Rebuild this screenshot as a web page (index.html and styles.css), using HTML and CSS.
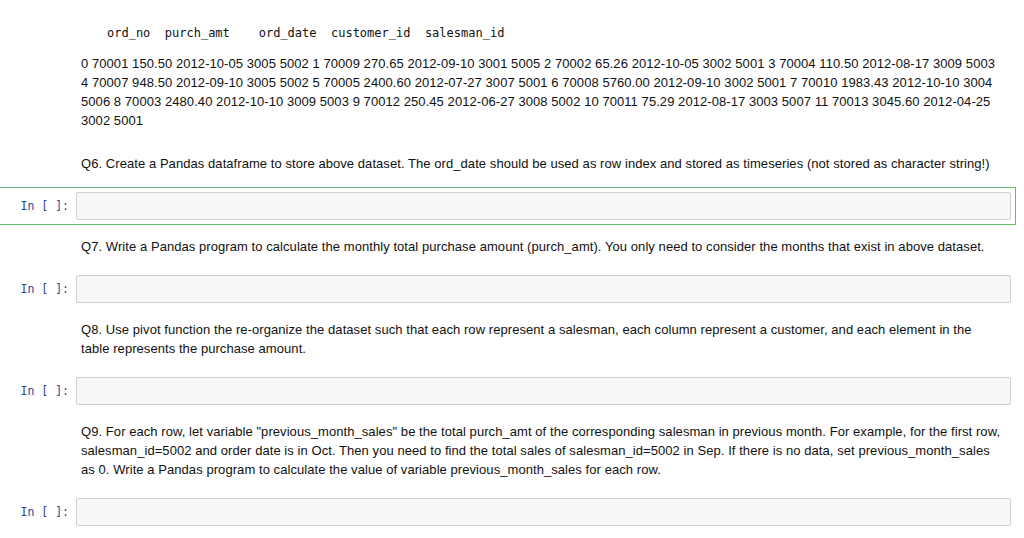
FILE: index.html
```html
<!DOCTYPE html>
<html>
<head>
<meta charset="utf-8">
<title>Notebook</title>
<link rel="stylesheet" href="styles.css">
</head>
<body>
<div class="notebook">
  <div class="cell md first">
    <div class="prompt"></div>
    <div class="rendered">
      <pre class="header">ord_no  purch_amt    ord_date  customer_id  salesman_id</pre>
      <p class="data">0 70001 150.50 2012-10-05 3005 5002 1 70009 270.65 2012-09-10 3001 5005 2 70002 65.26 2012-10-05 3002 5001 3 70004 110.50 2012-08-17 3009 5003 4 70007 948.50 2012-09-10 3005 5002 5 70005 2400.60 2012-07-27 3007 5001 6 70008 5760.00 2012-09-10 3002 5001 7 70010 1983.43 2012-10-10 3004 5006 8 70003 2480.40 2012-10-10 3009 5003 9 70012 250.45 2012-06-27 3008 5002 10 70011 75.29 2012-08-17 3003 5007 11 70013 3045.60 2012-04-25 3002 5001</p>
      <p class="q q6">Q6. Create a Pandas dataframe to store above dataset. The ord_date should be used as row index and stored as timeseries (not stored as character string!)</p>
    </div>
  </div>

  <div class="cell code selected">
    <div class="prompt">In&nbsp;[&nbsp;]:</div>
    <div class="input"></div>
  </div>

  <div class="cell md">
    <div class="prompt"></div>
    <div class="rendered">
      <p class="q">Q7. Write a Pandas program to calculate the monthly total purchase amount (purch_amt). You only need to consider the months that exist in above dataset.</p>
    </div>
  </div>

  <div class="cell code">
    <div class="prompt">In&nbsp;[&nbsp;]:</div>
    <div class="input"></div>
  </div>

  <div class="cell md">
    <div class="prompt"></div>
    <div class="rendered">
      <p class="q">Q8. Use pivot function the re-organize the dataset such that each row represent a salesman, each column represent a customer, and each element in the table represents the purchase amount.</p>
    </div>
  </div>

  <div class="cell code">
    <div class="prompt">In&nbsp;[&nbsp;]:</div>
    <div class="input"></div>
  </div>

  <div class="cell md">
    <div class="prompt"></div>
    <div class="rendered">
      <p class="q">Q9. For each row, let variable "previous_month_sales" be the total purch_amt of the corresponding salesman in previous month. For example, for the first row, salesman_id=5002 and order date is in Oct. Then you need to find the total sales of salesman_id=5002 in Sep. If there is no data, set previous_month_sales as 0. Write a Pandas program to calculate the value of variable previous_month_sales for each row.</p>
    </div>
  </div>

  <div class="cell code">
    <div class="prompt">In&nbsp;[&nbsp;]:</div>
    <div class="input"></div>
  </div>
</div>
</body>
</html>
```

FILE: styles.css
```css
html, body {
  margin: 0;
  padding: 0;
  background: #ffffff;
}

body {
  font-family: "Liberation Sans", Arial, sans-serif;
  font-size: 13px;
  color: #111111;
}

.notebook {
  width: 1016px;
}

.cell {
  display: flex;
  border: 1px solid transparent;
  border-left-width: 0;
  padding: 4px;
  padding-left: 0;
}

.cell.selected {
  border-color: #66bb6a;
}

.prompt {
  flex: 0 0 76px;
  box-sizing: border-box;
  padding-right: 7px;
  text-align: right;
  font-family: "DejaVu Sans Mono", "Liberation Mono", monospace;
  font-size: 11.5px;
  color: #303f9f;
  white-space: nowrap;
}

.code {
  align-items: center;
}

.input {
  flex: 1;
  box-sizing: border-box;
  height: 28px;
  background: #f7f7f7;
  border: 1px solid #cfcfcf;
  border-radius: 2px;
}

.md {
  border-top-width: 0;
  border-bottom-width: 0;
  padding-top: 12px;
  padding-bottom: 14px;
}

.md.first {
  padding-top: 24px;
  padding-bottom: 14px;
}

.rendered {
  flex: 1;
  padding: 0 9px 0 5px;
  letter-spacing: 0.065px;
}

.header {
  margin: 0;
  padding-left: 26px;
  font-family: "DejaVu Sans Mono", "Liberation Mono", monospace;
  font-size: 12px;
  line-height: 18px;
  letter-spacing: 0;
  color: #111111;
}

.data {
  margin: 12px 0 0;
  line-height: 19px;
}

.q {
  margin: 0;
  line-height: 19px;
}

.q6 {
  margin-top: 24px;
}
```
